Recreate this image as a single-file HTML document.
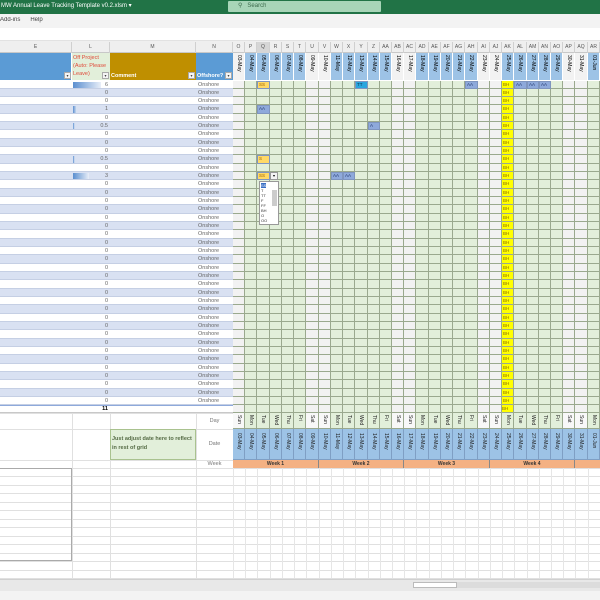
<!DOCTYPE html>
<html><head><meta charset="utf-8">
<style>
*{margin:0;padding:0;box-sizing:border-box}
body{width:600px;height:600px;overflow:hidden;background:#fff;font-family:"Liberation Sans",sans-serif;position:relative}
.a{position:absolute;overflow:hidden;white-space:nowrap}
.v{writing-mode:vertical-rl;font-size:5px;display:flex;align-items:center;justify-content:flex-start;padding-top:2px}
</style></head><body>
<div class="a" style="left:0;top:0;width:600px;height:14px;background:#217346"></div>
<div class="a" style="left:1px;top:2px;font-size:6px;color:#fff">MW Annual Leave Tracking Template v0.2.xlsm ▾</div>
<div class="a" style="left:228px;top:1px;width:153px;height:11px;background:#a8d5b8;border-radius:1px"></div>
<div class="a" style="left:238px;top:2px;font-size:6px;color:#3c6b4c">⚲ &nbsp; Search</div>
<div class="a" style="left:0;top:14px;width:600px;height:14px;background:#f3f3f3"></div>
<div class="a" style="left:0;top:17px;font-size:6px;color:#444">Add-ins &nbsp; &nbsp; &nbsp;Help</div>
<div class="a" style="left:0;top:28px;width:600px;height:13px;background:#fff;border-bottom:1px solid #e2e2e2"></div>
<div class="a" style="left:0;top:41px;width:600px;height:12px;background:#efefef;border-bottom:1px solid #c8c8c8"></div>
<div id="g"></div>
<script>
var g=document.getElementById('g'),h='';
function d(x,y,w,ht,st,t){var X=Math.round(x),Y=Math.round(y),Wd=Math.round(x+w)-X,H=Math.round(y+ht)-Y;h+='<div class="a" style="left:'+X+'px;top:'+Y+'px;width:'+Wd+'px;height:'+H+'px;'+(st||'')+'">'+(t||'')+'</div>';}
var X0=233,W=12.23,N=31;
var dates=[];for(var i=3;i<=31;i++)dates.push((i<10?'0':'')+i+'-May');dates.push('01-Jun');
var days=['Sun','Mon','Tue','Wed','Thu','Fri','Sat'];
var letters=['O','P','Q','R','S','T','U','V','W','X','Y','Z','AA','AB','AC','AD','AE','AF','AG','AH','AI','AJ','AK','AL','AM','AN','AO','AP','AQ','AR','AS'];
var cl=[[0,72,'E'],[72,38,'L'],[110,86,'M'],[196,37,'N']];
cl.forEach(function(c){d(c[0],42,c[1],11,'border-right:1px solid #d0d0d0;font-size:5px;color:#555;text-align:center;line-height:11px',c[2]);});
for(var i=0;i<N;i++){d(X0+i*W,42,W,11,'border-right:1px solid #d0d0d0;font-size:5px;color:#555;text-align:center;line-height:11px;'+(i==2?'background:#d6d6d6;':''),letters[i]);}
d(0,53,72,27,'background:#5b9bd5;border-right:1px solid #fff');
d(72,53,38,27,'background:#e2efda;color:#e04a3a;font-size:5.5px;line-height:8px;padding:1px;white-space:normal','Off Project (Auto: Please Leave)');
d(110,53,86,27,'background:#bf8f00;color:#fff;font-size:5.5px;font-weight:bold;padding:20px 0 0 1px','Comment');
d(196,53,37,27,'background:#5b9bd5;color:#fff;font-size:5.5px;font-weight:bold;padding:20px 0 0 1px','Offshore?');
[64,102,188,225].forEach(function(x){d(x,72,7,7,'background:#f4f4f4;border:1px solid #aaa;font-size:4px;text-align:center;line-height:5px;color:#444','▾');});
function we(i){var k=i%7;return k==0||k==6;}
for(var i=0;i<N;i++){var x=X0+i*W;d(x,53,W,27,'background:'+(we(i)?'#f2f2f2':'#9dc3e6')+';border-right:1px solid #fff;color:#222','');h+='<div class="a v" style="left:'+Math.round(x)+'px;top:53px;width:12px;height:27px">'+dates[i]+'</div>';}
var vals={0:'6',3:'1',5:'0.5',9:'0.5',11:'3'};
var RH=8.33,R0=80.5,NR=39;
for(var r=0;r<NR;r++){var y=R0+r*RH,bg=r%2?'#d9e1f2':'#fff';
d(0,y,233,RH,'background:'+bg+';border-bottom:1px solid #c5cfe4');
d(72,y,36,RH,'font-size:5.5px;color:#666;text-align:right;line-height:8px',vals[r]||'0');
d(197,y,36,RH,'font-size:5.5px;color:#666;line-height:8px;padding-left:1px','Onshore');
for(var i=0;i<N;i++){var x=X0+i*W;var c=we(i)?'#f2f2f2':'#e2efda';if(i==22)c='#ffff00';
d(x,y,W,RH,'background:'+c+';border-right:1px solid #9aa98e;border-bottom:1px solid #9aa98e;font-size:4.5px;line-height:7px;padding-left:1px;color:#8a6a00',i==22?'BH':'');}}
function bar(r,w){d(73,R0+r*RH+1,w,RH-2,'background:linear-gradient(90deg,#5b8fd0,#e8eef8)');}
bar(0,28);bar(3,4);bar(5,2);bar(9,2);bar(11,16);
function mark(r,i,t,c,tc){d(X0+i*W,R0+r*RH,W,RH,'background:'+c+';border:1px solid #7f95bf;font-size:4.5px;line-height:6px;padding-left:1px;color:'+(tc||'#243a70'),t);}
mark(0,2,'SS','#ffd966','#a06000');mark(0,10,'TT','#29a6de','#135');mark(0,19,'AA','#8ea9db');mark(0,23,'AA','#8ea9db');mark(0,24,'AA','#8ea9db');mark(0,25,'AA','#8ea9db');
mark(3,2,'AA','#8ea9db');mark(5,11,'A','#8ea9db');mark(9,2,'S','#ffd966','#a06000');
mark(11,2,'SS','#ffd966','#a06000');mark(11,8,'AA','#8ea9db');mark(11,9,'AA','#8ea9db');
d(270,R0+11*RH,8,RH,'background:#f4f4f4;border:1px solid #999;font-size:4px;text-align:center;line-height:6px','▾');
d(259,181,20,44,'background:#fff;border:1px solid #999;font-size:4px;line-height:5px;color:#333;padding:1px','<span style="background:#3a6fc4;color:#fff">SS</span><br>T<br>TT<br>F<br>FF<br>BH<br>O<br>OO');
d(272,190,5,16,'background:#ccc');
var ty=R0+NR*RH;
d(0,ty,233,8,'border-top:1px solid #8ea9db;border-bottom:1px solid #c8c8c8');
d(72,ty,36,8,'font-size:5.5px;font-weight:bold;text-align:right;line-height:8px','11');
for(var i=0;i<N;i++){var x=X0+i*W;d(x,ty,W,8,'background:'+(i==22?'#ffff00':we(i)?'#f2f2f2':'#e2efda')+';border-right:1px solid #9aa98e;border-bottom:1px solid #9aa98e;font-size:4.5px;line-height:7px;color:#8a6a00',i==22?'BH':'');}
var rows=[413,429,460,468];for(var y=476;y<580;y+=8.5)rows.push(y);
rows.forEach(function(y){d(0,y,600,1,'background:#e0e0e0');});
[72,110,196,233].forEach(function(x){d(x,413,1,165,'background:#e0e0e0');});
for(var i=0;i<N;i++)d(X0+i*W,468,1,110,'background:#e6e6e6');
d(196,413,37,16,'font-size:5.5px;color:#777;text-align:center;line-height:16px','Day');
d(196,429,37,31,'font-size:5.5px;color:#777;text-align:center;line-height:31px','Date');
d(196,460,37,8,'font-size:5.5px;color:#777;text-align:center;line-height:8px','Week');
for(var i=0;i<N;i++){var x=X0+i*W;
d(x,413,W,16,'background:'+(we(i)?'#f8f8f8':'#e2efda')+';border-right:1px solid #9aa98e;border-bottom:1px solid #9aa98e');
h+='<div class="a v" style="left:'+Math.round(x)+'px;top:413px;width:12px;height:16px;color:#222">'+days[i%7]+'</div>';
d(x,429,W,31,'background:#9dc3e6;border-right:1px solid #7f9fc4;border-bottom:1px solid #7f9fc4');
h+='<div class="a v" style="left:'+Math.round(x)+'px;top:429px;width:12px;height:31px;padding-top:4px;color:#222">'+dates[i]+'</div>';}
for(var w=0;w<5;w++){var x=X0+w*7*W;d(x,460,7*W,8,'background:#f4b183;border-right:1px solid #888;font-size:5px;font-weight:bold;text-align:center;line-height:8px;color:#333',w<4?'Week '+(w+1):'');}
d(110,429,86,31,'background:#e2efda;border:1px solid #a9c28f;font-size:5.5px;font-weight:bold;color:#556b45;white-space:normal;line-height:9px;padding:5px 1px','Just adjust date here to reflect in rest of grid');
d(-2,468,74,93,'border:1px solid #aaa;background:transparent');
g.innerHTML=h;
</script>
<div class="a" style="left:0;top:579px;width:600px;height:12px;background:#e8e8e8;border-top:1px solid #d0d0d0"></div>
<div class="a" style="left:413px;top:582px;width:44px;height:6px;background:#fff;border:1px solid #bbb"></div>
<div class="a" style="left:457px;top:582px;width:143px;height:6px;background:#dcdcdc"></div>
<div class="a" style="left:0;top:591px;width:600px;height:9px;background:#f3f3f3"></div>
</body></html>
